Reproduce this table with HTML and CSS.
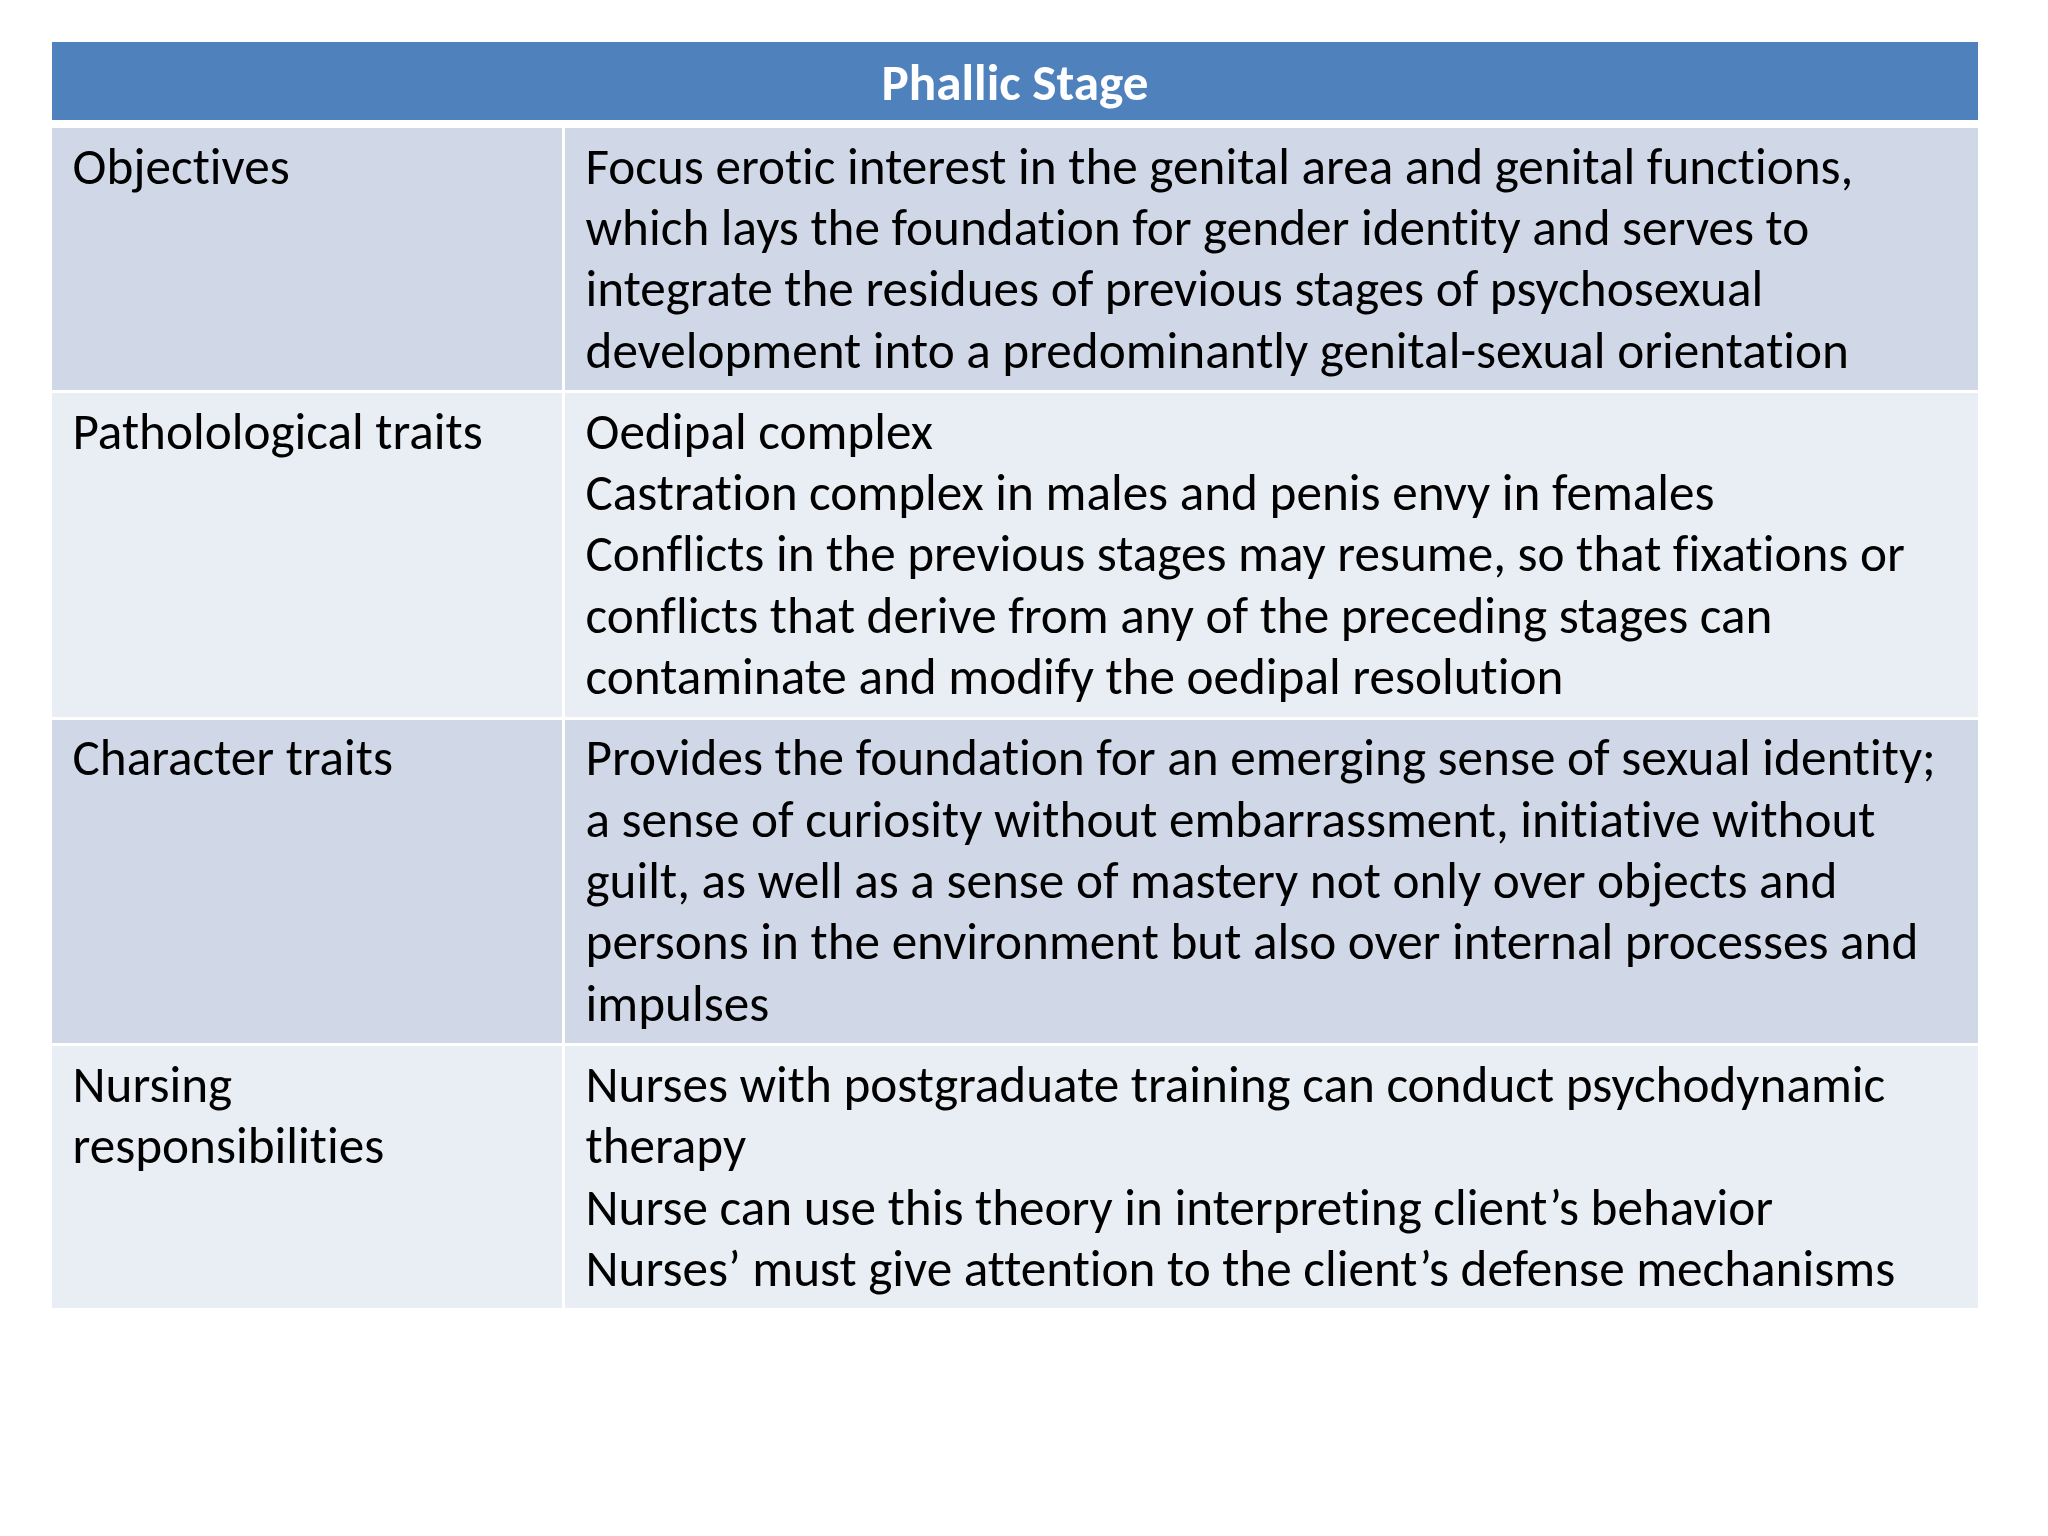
FILE: index.html
```html
<!DOCTYPE html>
<html lang="en">
<head>
<meta charset="utf-8">
<title>Phallic Stage</title>
<link rel="stylesheet" href="styles.css">
</head>
<body>
<div class="slide">
  <div class="grid">
    <div class="head">Phallic Stage</div>

    <div class="cell band1 label">Objectives</div>
    <div class="cell band1 body">Focus erotic interest in the genital area and genital functions,<br>which lays the foundation for gender identity and serves to<br>integrate the residues of previous stages of psychosexual<br>development into a predominantly genital-sexual orientation</div>

    <div class="cell band2 label">Patholological traits</div>
    <div class="cell band2 body">Oedipal complex<br>Castration complex in males and penis envy in females<br>Conflicts in the previous stages may resume, so that fixations or<br>conflicts that derive from any of the preceding stages can<br>contaminate and modify the oedipal resolution</div>

    <div class="cell band1 label">Character traits</div>
    <div class="cell band1 body">Provides the foundation for an emerging sense of sexual identity;<br>a sense of curiosity without embarrassment, initiative without<br>guilt, as well as a sense of mastery not only over objects and<br>persons in the environment but also over internal processes and<br>impulses</div>

    <div class="cell band2 label">Nursing<br>responsibilities</div>
    <div class="cell band2 body">Nurses with postgraduate training can conduct psychodynamic<br>therapy<br>Nurse can use this theory in interpreting client’s behavior<br>Nurses’ must give attention to the client’s defense mechanisms</div>
  </div>
</div>
</body>
</html>
```

FILE: styles.css
```css
html, body {
  margin: 0;
  padding: 0;
  background: #ffffff;
}

.slide {
  width: 2048px;
  height: 1536px;
  box-sizing: border-box;
  padding: 42px 0 0 52px;
  font-family: Carlito, Lato, "Liberation Sans", sans-serif;
  font-variant-ligatures: none;
  font-feature-settings: "liga" 0, "clig" 0;
  color: #000000;
}

.grid {
  width: 1926px;
  display: grid;
  grid-template-columns: 510px 1413px;
  column-gap: 3px;
  row-gap: 3px;
  background: #ffffff;
}

.head {
  grid-column: 1 / -1;
  height: 77.5px;
  margin-bottom: 5.5px;
  background: #4f81bd;
  color: #ffffff;
  font-weight: bold;
  font-size: 51.2px;
  line-height: 61.4px;
  text-align: center;
  box-sizing: border-box;
  padding-top: 10px;
}

.cell {
  font-size: 51.2px;
  line-height: 61.4px;
  padding: 7.5px 20px 9px 20.5px;
  white-space: nowrap;
}

.band1 {
  background: #d0d8e8;
}

.band2 {
  background: #e9edf4;
}
```
